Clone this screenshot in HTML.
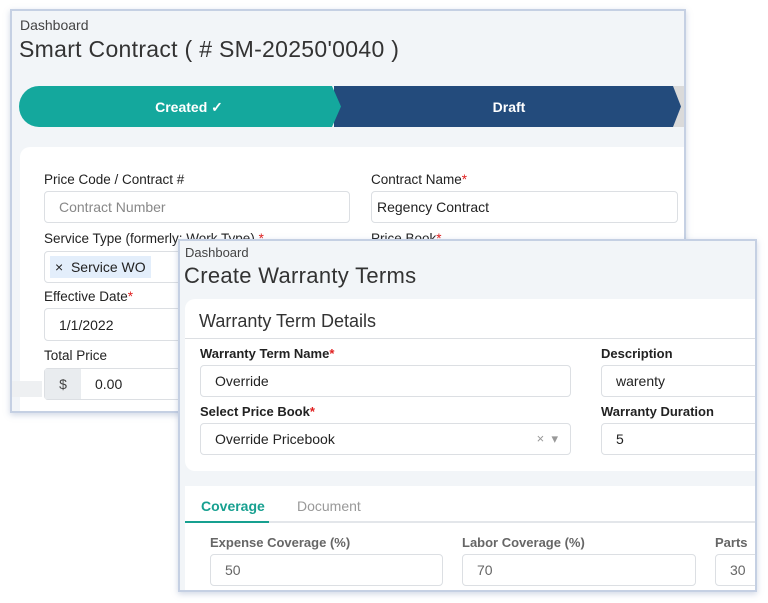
<!DOCTYPE html>
<html><head><meta charset="utf-8"><style>
*{box-sizing:border-box;margin:0;padding:0}
body{width:768px;height:603px;background:#fff;font-family:"Liberation Sans",sans-serif;position:relative;overflow:hidden;color:#222}
.a{position:absolute}
.p{background:#f2f5f8;border:2px solid #c5d0e3;box-shadow:0 2px 6px rgba(120,140,180,.35)}
.in{position:absolute;background:#fff;border:1px solid #dcdfe3;border-radius:4px;font-size:14px;padding-left:14px;display:flex;align-items:center;color:#222}
.lb{position:absolute;font-size:13.5px;color:#222}
.b{font-weight:bold;font-size:13px}
.r{color:#e02020}
</style></head><body>
<div class="a p" style="left:10px;top:9px;width:676px;height:404px;overflow:hidden">
 <div class="a" style="left:8px;top:6px;font-size:14px;color:#444">Dashboard</div>
 <div class="a" style="left:7px;top:25px;font-size:23px;color:#333;letter-spacing:0.3px">Smart Contract ( # SM-20250'0040 )</div>
 <svg class="a" style="left:7px;top:75px" width="666" height="41">
  <rect x="650" y="0" width="16" height="41" fill="#dadada"/>
  <polygon points="315,0 654,0 662,20.5 654,41 315,41" fill="#234b7c"/>
  <path d="M20,0 H313 L322,20.5 L313,41 H20 A20,20.5 0 0 1 20,0Z" fill="#14a89d"/>
  <text x="170" y="26" font-family="Liberation Sans" font-weight="bold" font-size="14" fill="#fff" text-anchor="middle">Created ✓</text>
  <text x="490" y="26" font-family="Liberation Sans" font-weight="bold" font-size="14" fill="#fff" text-anchor="middle">Draft</text>
 </svg>
 <div class="a" style="left:8px;top:136px;width:670px;height:270px;background:#fff;border-radius:10px 0 0 0"></div>
 <div class="lb" style="left:32px;top:161px">Price Code / Contract #</div>
 <div class="in" style="left:32px;top:180px;width:306px;height:32px;color:#888">Contract Number</div>
 <div class="lb" style="left:359px;top:161px">Contract Name<span class="r">*</span></div>
 <div class="in" style="left:359px;top:180px;width:307px;height:32px;padding-left:5px">Regency Contract</div>
 <div class="lb" style="left:32px;top:220px">Service Type (formerly: Work Type) <span class="r">*</span></div>
 <div class="lb" style="left:359px;top:220px">Price Book<span class="r">*</span></div>
 <div class="in" style="left:32px;top:240px;width:306px;height:32px;padding-left:5px"><span style="background:#e3eefb;padding:3px 5px;font-size:14px">× &nbsp;Service WO</span></div>
 <div class="lb" style="left:32px;top:278px">Effective Date<span class="r">*</span></div>
 <div class="in" style="left:32px;top:297px;width:306px;height:33px">1/1/2022</div>
 <div class="lb" style="left:32px;top:337px">Total Price</div>
 <div class="in" style="left:32px;top:357px;width:306px;height:32px;padding-left:0"><span style="background:#e9ecef;width:36px;height:100%;display:flex;align-items:center;justify-content:center;color:#444">$</span><span style="margin-left:14px">0.00</span></div>
 <div class="a" style="left:0;top:370px;width:30px;height:16px;background:#eef0f2"></div>
</div>
<div class="a p" style="left:178px;top:239px;width:579px;height:353px;overflow:hidden">
 <div class="a" style="left:5px;top:4px;font-size:13px;color:#444">Dashboard</div>
 <div class="a" style="left:4px;top:22px;font-size:22px;color:#333;letter-spacing:0.3px">Create Warranty Terms</div>
 <div class="a" style="left:5px;top:58px;width:580px;height:172px;background:#fff;border-radius:10px 0 0 10px"></div>
 <div class="a" style="left:19px;top:70px;font-size:18px;color:#333">Warranty Term Details</div>
 <div class="a" style="left:5px;top:97px;width:580px;height:1px;background:#dcdfe3"></div>
 <div class="lb b" style="left:20px;top:105px">Warranty Term Name<span class="r">*</span></div>
 <div class="in" style="left:20px;top:124px;width:371px;height:32px">Override</div>
 <div class="lb b" style="left:421px;top:105px">Description</div>
 <div class="in" style="left:421px;top:124px;width:180px;height:32px">warenty</div>
 <div class="lb b" style="left:20px;top:163px">Select Price Book<span class="r">*</span></div>
 <div class="in" style="left:20px;top:182px;width:371px;height:32px">Override Pricebook<span style="position:absolute;right:12px;color:#999;font-size:13px">×&nbsp;&nbsp;▾</span></div>
 <div class="lb b" style="left:421px;top:163px">Warranty Duration</div>
 <div class="in" style="left:421px;top:182px;width:180px;height:32px">5</div>
 <div class="a" style="left:5px;top:245px;width:580px;height:110px;background:#fff"></div>
 <div class="a" style="left:21px;top:257px;font-size:14px;font-weight:bold;color:#17a090">Coverage</div>
 <div class="a" style="left:117px;top:257px;font-size:14px;color:#999">Document</div>
 <div class="a" style="left:5px;top:280px;width:580px;height:2px;background:#e3e6ea"></div>
 <div class="a" style="left:5px;top:280px;width:84px;height:2px;background:#17a090"></div>
 <div class="lb b" style="left:30px;top:294px;color:#666">Expense Coverage (%)</div>
 <div class="in" style="left:30px;top:313px;width:233px;height:32px;color:#666">50</div>
 <div class="lb b" style="left:282px;top:294px;color:#666">Labor Coverage (%)</div>
 <div class="in" style="left:282px;top:313px;width:234px;height:32px;color:#666">70</div>
 <div class="lb b" style="left:535px;top:294px;color:#666">Parts</div>
 <div class="in" style="left:535px;top:313px;width:60px;height:32px;color:#666">30</div>
</div>
</body></html>
